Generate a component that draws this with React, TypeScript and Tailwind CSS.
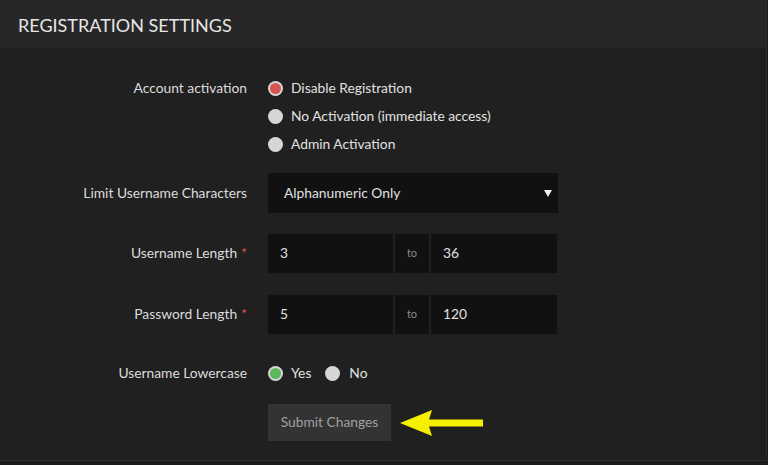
import React from "react";

const font = { fontFamily: "Lato, 'Open Sans', sans-serif" };

function Radio({ color }: { color?: string }) {
  return (
    <span className="w-[15px] h-[15px] rounded-full bg-[#d6d6d6] flex items-center justify-center shrink-0">
      {color ? <span className={`w-[11px] h-[11px] rounded-full ${color}`} /> : null}
    </span>
  );
}

function Label({ children, star }: { children: React.ReactNode; star?: boolean }) {
  return (
    <div className="w-[247px] text-right text-[13.8px] text-[#dcdcdc] pr-0">
      {children}
      {star ? <span className="text-[#d9534f] ml-[4px]">*</span> : null}
    </div>
  );
}

export default function App() {
  return (
    <div className="w-[768px] h-[465px] bg-[#1b1b1b] overflow-hidden" style={font}>
      <div className="w-[767px] h-[461px] bg-[#202020] border-r border-b border-[#2d2d2d] flex flex-col">
        <div className="h-[48px] bg-[#272727] flex items-center pl-[18px] pt-[2px] shrink-0">
          <span className="text-[18px] text-[#e6e6e6]">REGISTRATION SETTINGS</span>
        </div>

        <div className="flex mt-[26px]">
          <div className="h-[28px] flex items-center"><Label>Account activation</Label></div>
          <div className="ml-[21px] flex flex-col">
            {[
              ["Disable Registration", "bg-[#d9534f]"],
              ["No Activation (immediate access)", ""],
              ["Admin Activation", ""],
            ].map(([t, c]) => (
              <div key={t} className="h-[28px] flex items-center gap-[8px] text-[13.8px] text-[#e0e0e0]">
                <Radio color={c || undefined} />
                <span>{t}</span>
              </div>
            ))}
          </div>
        </div>

        <div className="flex items-center mt-[15px]">
          <Label>Limit Username Characters</Label>
          <div className="ml-[21px] w-[290px] h-[40px] bg-[#111111] flex items-center justify-between pl-[16px] pr-[6px] text-[13.8px] text-[#e0e0e0]">
            <span>Alphanumeric Only</span>
            <svg width="8" height="7" viewBox="0 0 8 7"><path d="M0 0 H8 L4 7 Z" fill="#f0f0f0" /></svg>
          </div>
        </div>

        {[
          ["Username Length", "3", "36", "mt-[21px]"],
          ["Password Length", "5", "120", "mt-[22px]"],
        ].map(([l, a, b, m]) => (
          <div key={l} className={`flex items-center ${m}`}>
            <Label star>{l}</Label>
            <div className="ml-[21px] flex gap-[2px] h-[39px] text-[13.8px] text-[#e0e0e0]">
              <div className="w-[125px] bg-[#111111] flex items-center pl-[12px]">{a}</div>
              <div className="w-[34px] bg-[#111111] flex items-center justify-center text-[11px] text-[#8a8a8a]">to</div>
              <div className="w-[126px] bg-[#111111] flex items-center pl-[12px]">{b}</div>
            </div>
          </div>
        ))}

        <div className="flex items-center mt-[25px] h-[28px]">
          <Label>Username Lowercase</Label>
          <div className="ml-[21px] flex items-center text-[13.8px] text-[#e0e0e0]">
            <Radio color="bg-[#5cb85c]" />
            <span className="ml-[8px]">Yes</span>
            <span className="ml-[14px]"><Radio /></span>
            <span className="ml-[9px]">No</span>
          </div>
        </div>

        <div className="flex items-center mt-[17px]">
          <div className="w-[247px]" />
          <button className="ml-[21px] w-[123px] h-[37px] bg-[#333333] text-[13.8px] text-[#a0a0a0]">Submit Changes</button>
          <svg className="ml-[9px]" width="84" height="30" viewBox="0 0 84 30">
            <path d="M0 15 L32 2 L29 11.5 L83 11.5 L83 18.5 L29 18.5 L32 28 Z" fill="#f5f000" />
          </svg>
        </div>
      </div>
    </div>
  );
}
